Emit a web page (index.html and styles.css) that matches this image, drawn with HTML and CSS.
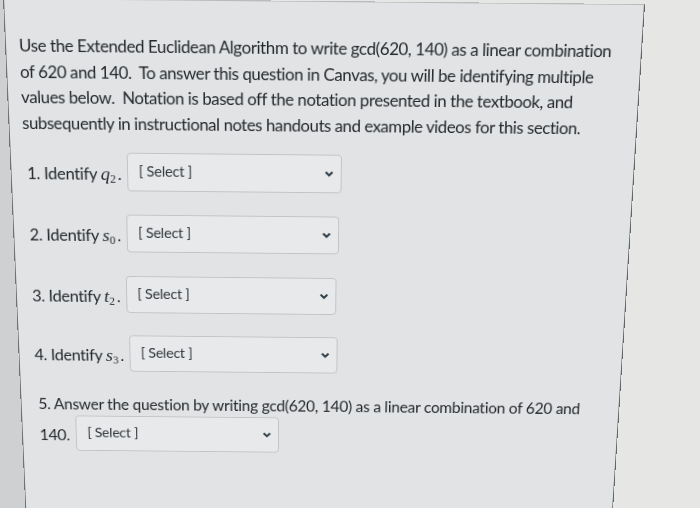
FILE: index.html
```html
<!DOCTYPE html>
<html>

<head>
  <title>Quiz Question</title>
  <link rel="stylesheet" href="styles.css">
</head>

<body>
  <div class="question-panel">
    <p class="question-text">Use the Extended Euclidean Algorithm to write gcd(620, 140) as a linear combination<br>
      of 620 and 140.&nbsp; To answer this question in Canvas, you will be identifying multiple<br>
      values below.&nbsp; Notation is based off the notation presented in the textbook, and<br>
      subsequently in instructional notes handouts and example videos for this section.</p>

    <div class="answer-row">
      <span class="answer-label">1. Identify <span class="math">q<sub>2</sub></span>.</span>
      <span class="select-box">[ Select ]
        <svg class="chevron" width="10" height="7" viewBox="0 0 10 7"><polyline points="1.5,1.5 5,5 8.5,1.5" /></svg>
      </span>
    </div>
    <div class="answer-row">
      <span class="answer-label">2. Identify <span class="math">s<sub>0</sub></span>.</span>
      <span class="select-box">[ Select ]
        <svg class="chevron" width="10" height="7" viewBox="0 0 10 7"><polyline points="1.5,1.5 5,5 8.5,1.5" /></svg>
      </span>
    </div>
    <div class="answer-row">
      <span class="answer-label">3. Identify <span class="math">t<sub>2</sub></span>.</span>
      <span class="select-box">[ Select ]
        <svg class="chevron" width="10" height="7" viewBox="0 0 10 7"><polyline points="1.5,1.5 5,5 8.5,1.5" /></svg>
      </span>
    </div>
    <div class="answer-row">
      <span class="answer-label">4. Identify <span class="math">s<sub>3</sub></span>.</span>
      <span class="select-box">[ Select ]
        <svg class="chevron" width="10" height="7" viewBox="0 0 10 7"><polyline points="1.5,1.5 5,5 8.5,1.5" /></svg>
      </span>
    </div>

    <div class="final-answer">
      <div class="final-text">5. Answer the question by writing gcd(620, 140) as a linear combination of 620 and</div>
      <div class="final-row">
        <span class="answer-label">140.</span>
        <span class="select-box small">[ Select ]
          <svg class="chevron" width="10" height="7" viewBox="0 0 10 7"><polyline points="1.5,1.5 5,5 8.5,1.5" /></svg>
        </span>
      </div>
    </div>
  </div>
</body>

</html>
```

FILE: styles.css
```css
body {
  margin: 0;
  height: 508px;
  overflow: hidden;
  font-family: Lato, "Open Sans", sans-serif;
  color: #24282d;
  background: linear-gradient(to right, #cfd0d1 0, #cfd0d1 60px, #e6e6e4 60px);
}

/* the screen is photographed at an angle, so the panel is tilted a bit */
.question-panel {
  width: 642px;
  height: 600px;
  margin: 1px 0 0 3px;
  box-sizing: border-box;
  padding: 34px 0 0 13px;
  background-color: #e1e3e4;
  border-top: 1px solid #b9bcbf;
  border-left: 1px solid #6f7378;
  border-right: 1px solid #62666b;
  transform-origin: 320px 0;
  transform: rotate(0.55deg) perspective(420px) rotateX(-4deg);
}

.question-text {
  margin: 0;
  font-size: 17px;
  letter-spacing: -0.4px;
  line-height: 26.5px;
}

.answer-row {
  display: flex;
  gap: 6px;
  margin: 16.5px 0 0 3px;
}

.answer-row + .answer-row {
  margin-top: 25.5px;
}

.answer-label {
  padding-top: 13px;
  font-size: 17px;
  letter-spacing: -0.3px;
  line-height: 20px;
}

.math {
  font-family: "Liberation Serif", serif;
  font-style: italic;
  font-size: 19px;
  letter-spacing: 0;
  margin-right: 2px;
}

.math sub {
  font-style: normal;
  font-size: 12px;
  line-height: 0;
  vertical-align: -3px;
}

.select-box {
  display: flex;
  align-items: center;
  justify-content: space-between;
  width: 221px;
  height: 41px;
  box-sizing: border-box;
  padding: 0 7px 3px 11px;
  border: 1px solid #c0c4c8;
  border-radius: 4px;
  background-color: #e7e9ea;
  font-size: 15px;
  letter-spacing: -0.2px;
  color: #33383e;
}

.select-box.small {
  width: 219px;
}

.chevron {
  margin-top: 3px;
  fill: none;
  stroke: #2d3b45;
  stroke-width: 2.2;
}

.final-answer {
  margin: 28px 0 0 5px;
}

.final-text {
  font-size: 16.5px;
  letter-spacing: -0.22px;
  line-height: 20px;
}

.final-row {
  display: flex;
  gap: 7px;
  margin-top: 3px;
}
```
